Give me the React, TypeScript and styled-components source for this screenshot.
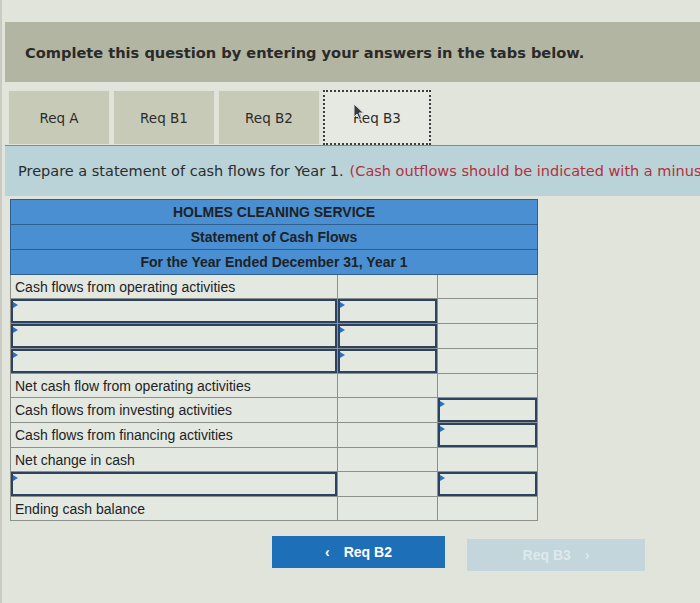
import React from 'react';
import styled, { createGlobalStyle } from 'styled-components';

const GlobalStyle = createGlobalStyle`
  html, body {
    margin: 0;
    padding: 0;
    background: #e1e4da;
  }
  * { box-sizing: border-box; }
`;

const Page = styled.div`
  position: relative;
  width: 700px;
  height: 603px;
  overflow: hidden;
  padding: 22px 0 0 3px;
  border-left: 2px solid #c9cbc3;
  font-family: 'DejaVu Sans', Verdana, sans-serif;
`;

const Banner = styled.div`
  height: 60px;
  background: #b3b5a3;
  display: flex;
  align-items: center;
  padding-left: 20px;
  font-size: 14.6px;
  font-weight: bold;
  color: #2a2b28;
  white-space: nowrap;
`;

const TabRow = styled.div`
  display: flex;
  gap: 3px;
  margin-top: 8px;
  padding-left: 3px;
  border-bottom: 1px solid #7f8c8f;
`;

const Tab = styled.div<{ $active?: boolean }>`
  width: ${(p) => (p.$active ? 108 : 102)}px;
  height: 55px;
  display: flex;
  align-items: center;
  justify-content: center;
  font-size: 13.5px;
  color: #2b2b2b;
  background: ${(p) => (p.$active ? '#e6e8e2' : '#c8cab8')};
  border: ${(p) => (p.$active ? '2px dotted #3a3c40' : '1px solid #e0e2d8')};
  position: relative;
`;

const Prompt = styled.div`
  height: 50px;
  background: #bad3d8;
  display: flex;
  align-items: center;
  padding-left: 13px;
  font-size: 14.5px;
  color: #2a2d2e;
  white-space: nowrap;
  overflow: hidden;
`;

const Red = styled.span`
  color: #b3303c;
  margin-left: 6px;
`;

const Sheet = styled.table`
  margin: 3px 0 0 5px;
  width: 528px;
  border-collapse: collapse;
  font-family: 'Liberation Sans', Arial, sans-serif;
  font-size: 14px;
  color: #1e2226;
`;

const HeadCell = styled.td`
  height: 25px;
  background: #4a8fd1;
  border: 1px solid #2f5f8e;
  text-align: center;
  font-weight: bold;
  padding: 0;
`;

const Cell = styled.td<{ $w?: number }>`
  height: 24px;
  background: #e3e9e1;
  border: 1px solid #8c918a;
  padding: 0 4px;
  width: ${(p) => (p.$w ? `${p.$w}px` : 'auto')};
`;

const InputCell = styled.td`
  height: 24px;
  background: #e3e9e1;
  border: 1px solid #8c918a;
  padding: 0;
`;

const InputBox = styled.div`
  position: relative;
  height: 24px;
  border: 2px solid #2c4260;
  &::before {
    content: '';
    position: absolute;
    left: 0;
    top: 1px;
    border-left: 5px solid #2f6fc0;
    border-top: 3px solid transparent;
    border-bottom: 3px solid transparent;
  }
`;

const ButtonRow = styled.div`
  display: flex;
  gap: 22px;
  margin: 15px 0 0 267px;
`;

const NavButton = styled.div<{ $disabled?: boolean }>`
  width: ${(p) => (p.$disabled ? 178 : 173)}px;
  height: 32px;
  display: flex;
  align-items: center;
  justify-content: center;
  gap: 14px;
  font-family: 'Liberation Sans', Arial, sans-serif;
  font-size: 14px;
  font-weight: bold;
  color: ${(p) => (p.$disabled ? '#dfe9ec' : '#ffffff')};
  background: ${(p) => (p.$disabled ? '#c3d6dc' : '#1d6fb8')};
  margin-top: ${(p) => (p.$disabled ? 3 : 0)}px;
`;

const Cursor = styled.svg`
  position: absolute;
  left: 28px;
  top: 11px;
`;

type Row = { label?: string; a?: boolean; b?: boolean; c?: boolean };

const rows: Row[] = [
  { label: 'Cash flows from operating activities' },
  { a: true, b: true },
  { a: true, b: true },
  { a: true, b: true },
  { label: 'Net cash flow from operating activities' },
  { label: 'Cash flows from investing activities', c: true },
  { label: 'Cash flows from financing activities', c: true },
  { label: 'Net change in cash' },
  { a: true, c: true },
  { label: 'Ending cash balance' },
];

const Slot = ({ on }: { on?: boolean }) =>
  on ? (
    <InputCell>
      <InputBox />
    </InputCell>
  ) : (
    <Cell />
  );

const App = () => {
  return (
    <>
      <GlobalStyle />
      <Page>
        <Banner>Complete this question by entering your answers in the tabs below.</Banner>
        <TabRow>
          <Tab>Req A</Tab>
          <Tab>Req B1</Tab>
          <Tab>Req B2</Tab>
          <Tab $active>
            Req B3
            <Cursor width="12" height="18" viewBox="0 0 12 18">
              <path d="M1 1 L1 14 L4 11 L6.5 16.5 L8.5 15.5 L6 10 L10.5 10 Z" fill="#3a3a3a" stroke="#dcdcdc" strokeWidth="1" />
            </Cursor>
          </Tab>
        </TabRow>
        <Prompt>
          Prepare a statement of cash flows for Year 1.
          <Red>(Cash outflows should be indicated with a minus sign.)</Red>
        </Prompt>
        <Sheet>
          <tbody>
            <tr>
              <HeadCell colSpan={3}>HOLMES CLEANING SERVICE</HeadCell>
            </tr>
            <tr>
              <HeadCell colSpan={3}>Statement of Cash Flows</HeadCell>
            </tr>
            <tr>
              <HeadCell colSpan={3}>For the Year Ended December 31, Year 1</HeadCell>
            </tr>
            {rows.map((r, i) => (
              <tr key={i}>
                {r.a ? <Slot on /> : <Cell $w={327}>{r.label}</Cell>}
                <Slot on={r.b} />
                <Slot on={r.c} />
              </tr>
            ))}
          </tbody>
        </Sheet>
        <ButtonRow>
          <NavButton>
            <span>‹</span>
            <span>Req B2</span>
          </NavButton>
          <NavButton $disabled>
            <span>Req B3</span>
            <span>›</span>
          </NavButton>
        </ButtonRow>
      </Page>
    </>
  );
};

export default App;
